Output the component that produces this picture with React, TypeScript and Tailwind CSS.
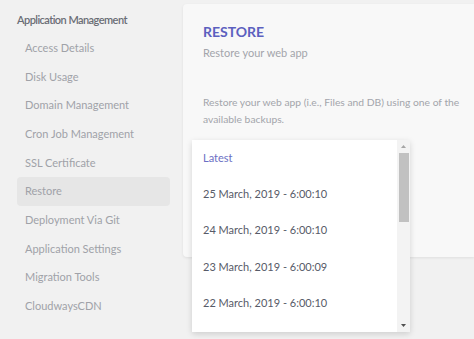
const menu = [
  "Access Details",
  "Disk Usage",
  "Domain Management",
  "Cron Job Management",
  "SSL Certificate",
  "Restore",
  "Deployment Via Git",
  "Application Settings",
  "Migration Tools",
  "CloudwaysCDN",
];

const backups = [
  "25 March, 2019 - 6:00:10",
  "24 March, 2019 - 6:00:10",
  "23 March, 2019 - 6:00:09",
  "22 March, 2019 - 6:00:10",
];

export default function App() {
  return (
    <div
      className="relative w-[474px] h-[339px] overflow-hidden bg-[#f1f1f1] flex"
      style={{ fontFamily: "Lato, 'Open Sans', sans-serif" }}
    >
      <aside className="w-[183px] shrink-0 pt-[12px] pl-[17px] pr-[13px]">
        <h2 className="text-[11px] font-semibold tracking-[-0.55px] text-[#6a6d75] leading-[15px]">
          Application Management
        </h2>
        <ul className="mt-[7px] flex flex-col">
          {menu.map((m) => (
            <li
              key={m}
              className={`h-[28.67px] pl-2 flex items-center text-[11px] text-[#a0a2a8] rounded-sm ${
                m === "Restore" ? "bg-[#e6e6e6]" : ""
              }`}
            >
              {m}
            </li>
          ))}
        </ul>
      </aside>

      <main className="flex-1 pt-[4px]">
        <section className="h-[253px] bg-[#f8f8f8] rounded-l-sm shadow-[0_1px_3px_rgba(0,0,0,0.08)] pl-[20px] pt-[19px]">
          <h1 className="text-[14px] font-bold text-[#5c60bf] leading-[17px]">RESTORE</h1>
          <p className="mt-[5px] text-[11px] text-[#a3a5ab]">Restore your web app</p>
          <p className="mt-[32px] text-[10.3px] leading-[17px] text-[#a3a5ab] w-[262px]">
            Restore your web app (i.e., Files and DB) using one of the available backups.
          </p>
        </section>
      </main>

      <div className="absolute left-[192px] top-[140px] w-[218px] h-[192px] bg-white shadow-[0_2px_6px_rgba(0,0,0,0.15)] flex">
        <ul className="flex-1 pl-[11px]">
          <li className="h-[32px] pt-[10px] text-[11px] text-[#6b6fc4]">Latest</li>
          {backups.map((b) => (
            <li key={b} className="h-[36.4px] pt-[14px] text-[11px] text-[#575b68]">
              {b}
            </li>
          ))}
        </ul>
        <div className="w-[13px] bg-[#f3f3f3] flex flex-col items-center">
          <svg width="7" height="12" viewBox="0 0 7 12" className="mt-[1px]">
            <path d="M1 7 L3.5 4 L6 7 Z" fill="#a5a5a5" />
          </svg>
          <div className="w-[10px] h-[69px] bg-[#c1c1c1]" />
          <div className="flex-1" />
          <svg width="7" height="12" viewBox="0 0 7 12" className="mb-[1px]">
            <path d="M1 5 L3.5 8 L6 5 Z" fill="#505050" />
          </svg>
        </div>
      </div>
    </div>
  );
}
